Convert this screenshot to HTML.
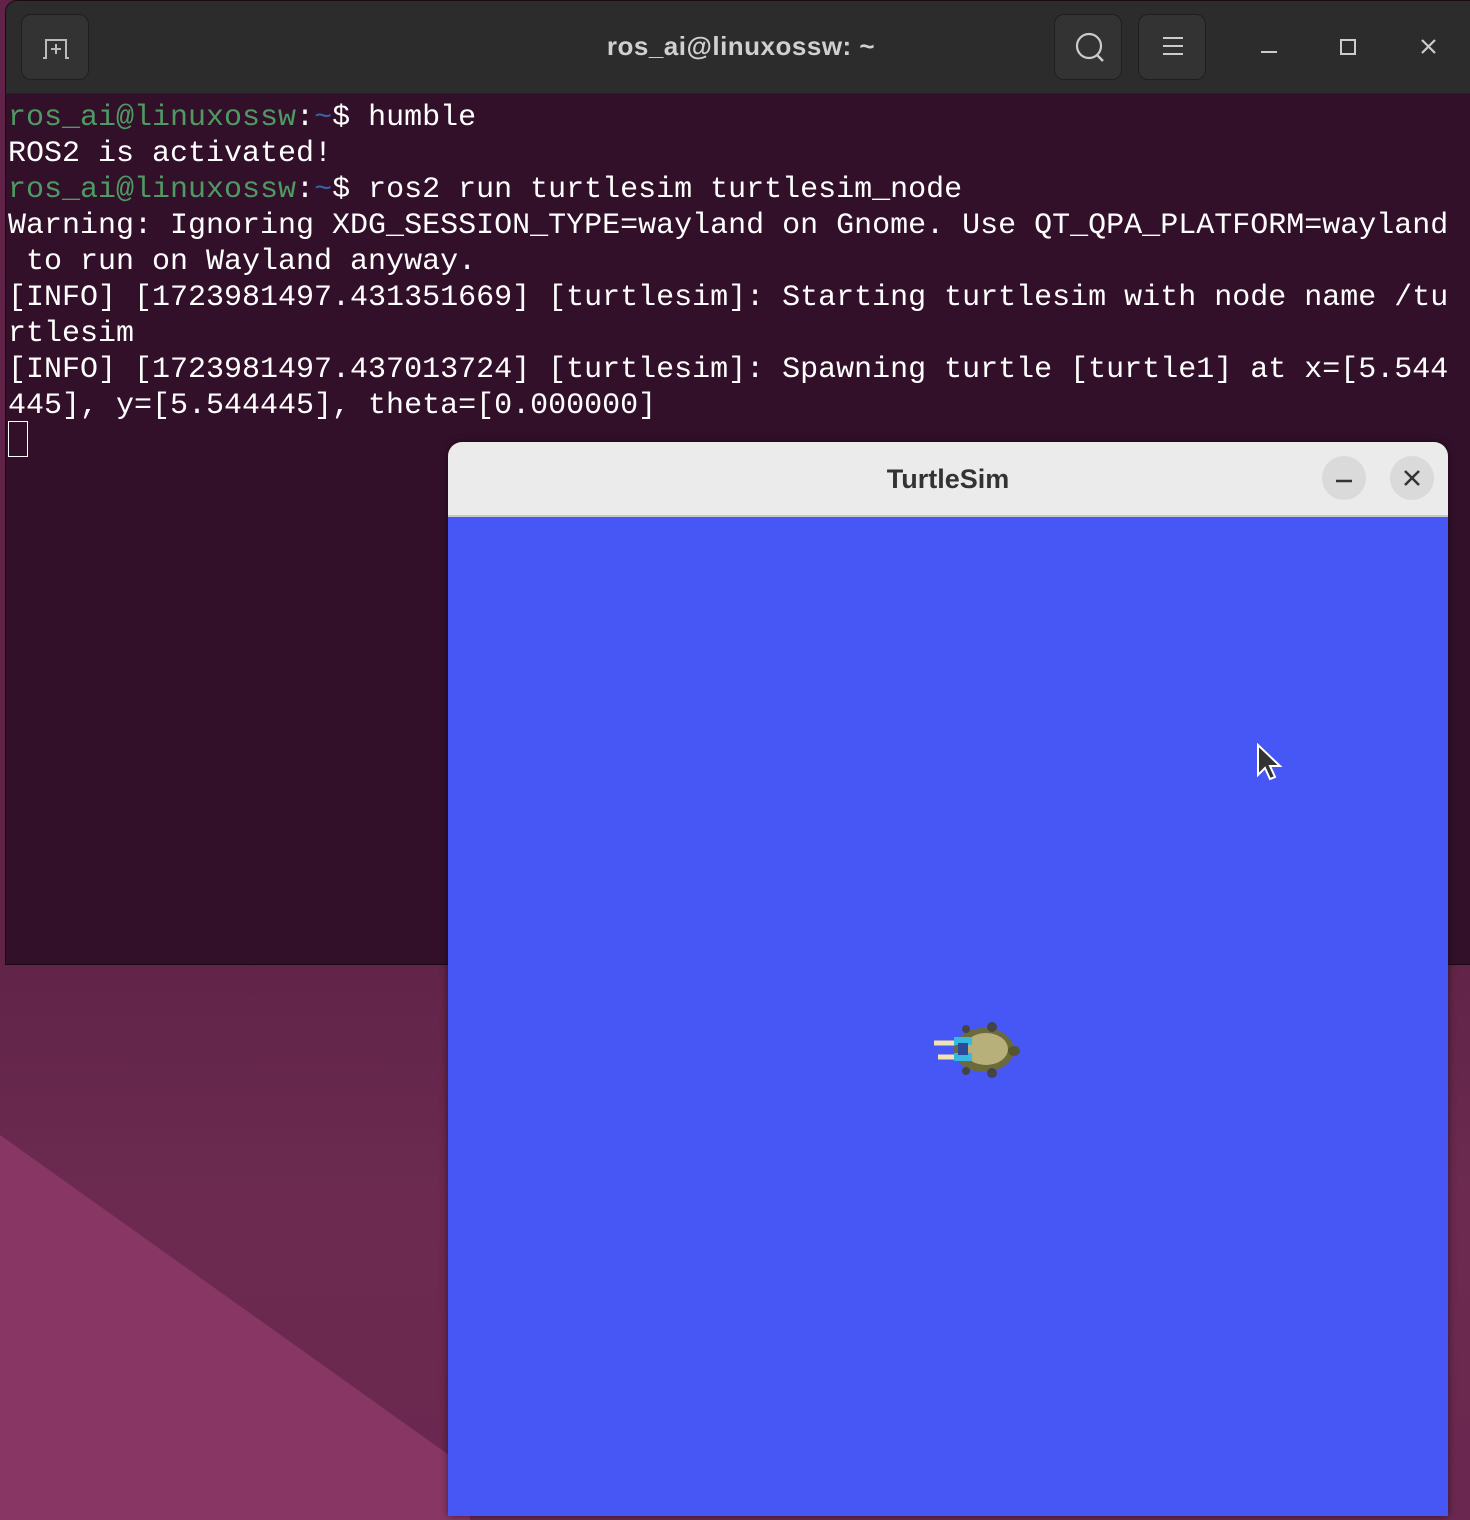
<!DOCTYPE html>
<html><head><meta charset="utf-8"><style>
body{margin:0;width:1470px;height:1520px;overflow:hidden;position:relative;background:#6a2a4f;font-family:"Liberation Sans",sans-serif}
.bg{position:absolute;inset:0;background:linear-gradient(180deg,#612448 960px,#6c2a50 1200px,#6a2850 1520px)}
.tri{position:absolute;left:0;top:0;width:1470px;height:1520px;background:#883765;clip-path:polygon(0 1135px,470px 1470px,470px 1520px,0 1520px)}
.term{position:absolute;left:5px;top:0;width:1475px;height:963px;background:#33102a;border-radius:12px 12px 0 0;border:1px solid #1a0a14;overflow:hidden}
.hdr{height:92px;background:#2c2c2c;position:relative;border-bottom:1px solid #222}
.btn{position:absolute;top:13px;width:68px;height:66px;border-radius:10px;background:#333;border:1px solid #1f1f1f;box-sizing:border-box}
.btn svg{position:absolute;left:-1px;top:-1px}
.title{position:absolute;left:0;width:1470px;top:30px;text-align:center;color:#d0d0d0;font-size:26px;font-weight:bold;letter-spacing:0.5px}
pre{margin:0;position:absolute;left:2px;top:99px;font-family:"Liberation Mono",monospace;font-size:30px;line-height:36px;color:#fff}
.g{color:#4e9a62}.b{color:#3465a4}
.ts{position:absolute;left:448px;top:442px;width:1000px;height:1074px;border-radius:14px 14px 0 0;overflow:hidden;box-shadow:0 0 8px rgba(0,0,0,.5)}
.tsh{height:73px;background:#ebebeb;border-bottom:2px solid #c8c8c8;position:relative}
.tsh .t{position:absolute;width:100%;text-align:center;top:22px;font-size:27px;font-weight:bold;color:#333}
.cb{position:absolute;top:14px;width:44px;height:44px;border-radius:50%;background:#dadada}
.blue{height:999px;background:#4757f5;position:relative}
</style></head><body>
<div class="bg"></div><div class="tri"></div>
<div class="term">
<div class="hdr">
<div class="btn" style="left:15px"><svg width="68" height="66" viewBox="0 0 68 66"><path d="M40 58" /><path d="M40 58"/><path d="M22 44h3V26h20v18h3M30 35h10M35 30v10" stroke="#bbb" stroke-width="2" fill="none"/></svg></div>
<div class="title">ros_ai@linuxossw: ~</div>
<div class="btn" style="left:1048px"><svg width="68" height="66"><circle cx="35" cy="32" r="12" stroke="#ccc" stroke-width="2.2" fill="none"/><path d="M43 41l6 6" stroke="#ccc" stroke-width="2.5"/></svg></div>
<div class="btn" style="left:1132px"><svg width="68" height="66"><path d="M25 24h20M25 32h20M25 40h20" stroke="#ccc" stroke-width="2"/></svg></div>
<svg style="position:absolute;left:1240px;top:30px" width="200" height="34"><path d="M15 21h16" stroke="#ccc" stroke-width="2"/><rect x="95" y="9" width="14" height="14" stroke="#ccc" stroke-width="2" fill="none"/><path d="M176 9l13 13M189 9l-13 13" stroke="#ccc" stroke-width="2.2"/></svg>
</div>
<pre><span class="g">ros_ai@linuxossw</span>:<span class="b">~</span>$ humble
ROS2 is activated!
<span class="g">ros_ai@linuxossw</span>:<span class="b">~</span>$ ros2 run turtlesim turtlesim_node
Warning: Ignoring XDG_SESSION_TYPE=wayland on Gnome. Use QT_QPA_PLATFORM=wayland
 to run on Wayland anyway.
[INFO] [1723981497.431351669] [turtlesim]: Starting turtlesim with node name /tu
rtlesim
[INFO] [1723981497.437013724] [turtlesim]: Spawning turtle [turtle1] at x=[5.544
445], y=[5.544445], theta=[0.000000]
</pre>
<div style="position:absolute;left:2px;top:420px;width:20px;height:36px;border:1.5px solid #fff;box-sizing:border-box"></div>
</div>
<div class="ts">
<div class="tsh"><div class="t">TurtleSim</div>
<div class="cb" style="left:874px"><svg width="44" height="44"><path d="M14 25h16" stroke="#333" stroke-width="2.5"/></svg></div>
<div class="cb" style="left:942px"><svg width="44" height="44"><path d="M15 15l14 14M29 15l-14 14" stroke="#333" stroke-width="2.5"/></svg></div>
</div>
<div class="blue">
<svg style="position:absolute;left:484px;top:500px" width="90" height="65" viewBox="0 0 90 65">
<path d="M2 26h28M6 40h24" stroke="#f3e2b0" stroke-width="5"/>
<ellipse cx="52" cy="33" rx="30" ry="22" fill="#6b6a3a"/>
<ellipse cx="54" cy="32" rx="22" ry="16" fill="#b8b07a"/>
<rect x="22" y="20" width="18" height="8" fill="#36b8e0"/><rect x="22" y="36" width="18" height="8" fill="#36b8e0"/>
<rect x="26" y="26" width="10" height="12" fill="#2c4a9a"/>
<ellipse cx="82" cy="34" rx="6" ry="5" fill="#555530"/>
<circle cx="60" cy="10" r="5" fill="#444"/><circle cx="60" cy="56" r="5" fill="#444"/>
<circle cx="34" cy="12" r="4" fill="#444"/><circle cx="34" cy="54" r="4" fill="#444"/>
</svg>
<svg style="position:absolute;left:808px;top:226px" width="28" height="40"><path d="M2 2v30l7-7 5 11 5-2-5-11h10z" fill="#333" stroke="#fff" stroke-width="2"/></svg>
</div></div>
</body></html>
